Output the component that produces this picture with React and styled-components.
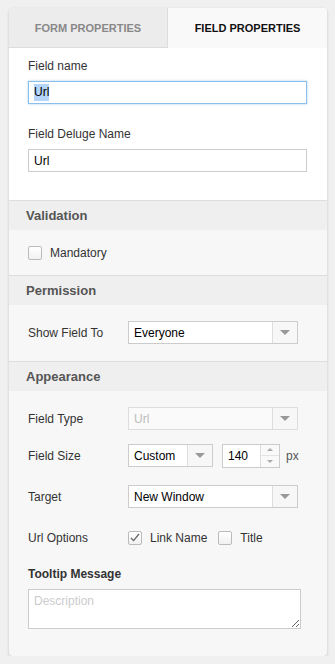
import styled, { createGlobalStyle } from "styled-components";

const GlobalStyle = createGlobalStyle`
  body {
    margin: 0;
    background: #f0f0f0;
    font-family: "Liberation Sans", Arial, sans-serif;
    color: #333;
  }
`;

const Panel = styled.div`
  margin: 8px 0 0 9px;
  width: 318px;
  background: #f7f7f7;
  border-radius: 4px;
  box-shadow: 0 1px 3px rgba(0, 0, 0, 0.18);
  overflow: hidden;
`;

const Tabs = styled.div`
  display: flex;
  height: 40px;
`;

const Tab = styled.div`
  flex: ${(p) => (p.$active ? "1" : "0 0 159px")};
  display: flex;
  align-items: center;
  justify-content: center;
  font-size: 11px;
  font-weight: bold;
  color: ${(p) => (p.$active ? "#111" : "#888")};
  background: ${(p) => (p.$active ? "#f9f9f9" : "#ececec")};
  border-right: ${(p) => (p.$active ? "none" : "1px solid #ddd")};
  border-bottom: ${(p) => (p.$active ? "none" : "1px solid #ddd")};
  box-sizing: border-box;
`;

const NameSection = styled.div`
  background: #fff;
  padding: 10px 20px 28px 19px;
`;

const Label = styled.div`
  font-size: 12px;
  line-height: 16px;
  margin-top: ${(p) => p.$top || 0}px;
  margin-bottom: 7px;
  font-weight: ${(p) => (p.$bold ? "bold" : "normal")};
`;

const TextBox = styled.div`
  height: 23px;
  box-sizing: border-box;
  border: 1px solid ${(p) => (p.$focus ? "#8cc0ec" : "#ccc")};
  box-shadow: ${(p) => (p.$focus ? "0 0 2px rgba(100,170,230,0.6)" : "none")};
  background: #fff;
  display: flex;
  align-items: center;
  padding-left: 5px;
  font-size: 12px;
  color: #000;
`;

const Selected = styled.span`
  background: #b5d5fb;
  line-height: 17px;
`;

const SectionHeader = styled.div`
  height: 30px;
  border-top: 1px solid #ddd;
  background: #efefef;
  display: flex;
  align-items: center;
  padding-left: 17px;
  font-size: 13px;
  font-weight: bold;
  color: #555;
  box-sizing: border-box;
`;

const SectionBody = styled.div`
  padding: ${(p) => p.$pad || "16px 0 15px 19px"};
`;

const Row = styled.div`
  display: flex;
  align-items: center;
  height: 23px;
  margin-top: ${(p) => p.$top || 0}px;
  font-size: 12px;
`;

const RowLabel = styled.div`
  width: 100px;
  flex: none;
`;

const Select = styled.div`
  width: ${(p) => p.$width}px;
  height: 23px;
  box-sizing: border-box;
  border: 1px solid ${(p) => (p.$disabled ? "#ddd" : "#ccc")};
  background: ${(p) => (p.$disabled ? "#fafafa" : "#fff")};
  display: flex;
  font-size: 12px;
  color: ${(p) => (p.$disabled ? "#bbb" : "#000")};
`;

const SelectValue = styled.div`
  flex: 1;
  display: flex;
  align-items: center;
  padding-left: 5px;
`;

const ArrowBox = styled.div`
  width: 24px;
  border-left: 1px solid #ddd;
  background: #f7f7f7;
  display: flex;
  align-items: center;
  justify-content: center;
`;

const Arrow = styled.div`
  width: 0;
  height: 0;
  border-left: 5px solid transparent;
  border-right: 5px solid transparent;
  border-top: 5px solid #999;
`;

const NumberBox = styled.div`
  margin-left: 9px;
  width: 58px;
  height: 24px;
  box-sizing: border-box;
  border: 1px solid #ccc;
  background: #fff;
  display: flex;
  font-size: 12px;
  color: #000;
`;

const Spinner = styled.div`
  width: 18px;
  border-left: 1px solid #ddd;
  background: #f9f9f9;
  display: flex;
  flex-direction: column;
`;

const SpinHalf = styled.div`
  flex: 1;
  display: flex;
  align-items: center;
  justify-content: center;
  border-top: ${(p) => (p.$down ? "1px solid #e4e4e4" : "none")};
`;

const SpinArrow = styled.div`
  width: 0;
  height: 0;
  border-left: 3px solid transparent;
  border-right: 3px solid transparent;
  ${(p) => (p.$down ? "border-top: 3px solid #aaa;" : "border-bottom: 3px solid #aaa;")}
`;

const Unit = styled.span`
  margin-left: 6px;
  color: #555;
`;

const Check = styled.div`
  width: 14px;
  height: 14px;
  box-sizing: border-box;
  border: 1px solid #bbb;
  border-radius: 2px;
  background: linear-gradient(#fff, #f1f1f1);
  display: flex;
  align-items: center;
  justify-content: center;
  flex: none;
  margin-left: ${(p) => p.$left || 0}px;
`;

const CheckText = styled.span`
  margin-left: 8px;
  font-size: 12px;
`;

const TooltipArea = styled.textarea`
  display: block;
  width: 273px;
  height: 40px;
  box-sizing: border-box;
  border: 1px solid #ccc;
  background: #fff;
  padding: 4px 5px;
  font-family: "Liberation Sans", Arial, sans-serif;
  font-size: 12px;
  outline: none;
  &::placeholder {
    color: #ccc;
  }
`;

const Tick = () => (
  <svg width="10" height="9" viewBox="0 0 10 9">
    <path d="M1 5 L3.6 7.6 L9 1" fill="none" stroke="#666" strokeWidth="1.3" />
  </svg>
);

const Dropdown = ({ width, value, disabled }) => (
  <Select $width={width} $disabled={disabled}>
    <SelectValue>{value}</SelectValue>
    <ArrowBox>
      <Arrow />
    </ArrowBox>
  </Select>
);

export default function App() {
  return (
    <>
      <GlobalStyle />
      <Panel>
        <Tabs>
          <Tab>FORM PROPERTIES</Tab>
          <Tab $active>FIELD PROPERTIES</Tab>
        </Tabs>
        <NameSection>
          <Label>Field name</Label>
          <TextBox $focus>
            <Selected>Url</Selected>
          </TextBox>
          <Label $top={22}>Field Deluge Name</Label>
          <TextBox>Url</TextBox>
        </NameSection>

        <SectionHeader>Validation</SectionHeader>
        <SectionBody>
          <Row style={{ height: 14 }}>
            <Check />
            <CheckText>Mandatory</CheckText>
          </Row>
        </SectionBody>

        <SectionHeader>Permission</SectionHeader>
        <SectionBody $pad="16px 0 17px 19px">
          <Row>
            <RowLabel>Show Field To</RowLabel>
            <Dropdown width={170} value="Everyone" />
          </Row>
        </SectionBody>

        <SectionHeader>Appearance</SectionHeader>
        <SectionBody $pad="16px 0 27px 19px">
          <Row>
            <RowLabel>Field Type</RowLabel>
            <Dropdown width={170} value="Url" disabled />
          </Row>
          <Row $top={14}>
            <RowLabel>Field Size</RowLabel>
            <Dropdown width={85} value="Custom" />
            <NumberBox>
              <SelectValue>140</SelectValue>
              <Spinner>
                <SpinHalf>
                  <SpinArrow />
                </SpinHalf>
                <SpinHalf $down>
                  <SpinArrow $down />
                </SpinHalf>
              </Spinner>
            </NumberBox>
            <Unit>px</Unit>
          </Row>
          <Row $top={18}>
            <RowLabel>Target</RowLabel>
            <Dropdown width={170} value="New Window" />
          </Row>
          <Row $top={18}>
            <RowLabel>Url Options</RowLabel>
            <Check>
              <Tick />
            </Check>
            <CheckText>Link Name</CheckText>
            <Check $left={11} />
            <CheckText>Title</CheckText>
          </Row>
          <Label $top={17} $bold>
            Tooltip Message
          </Label>
          <TooltipArea placeholder="Description" />
        </SectionBody>
      </Panel>
    </>
  );
}
